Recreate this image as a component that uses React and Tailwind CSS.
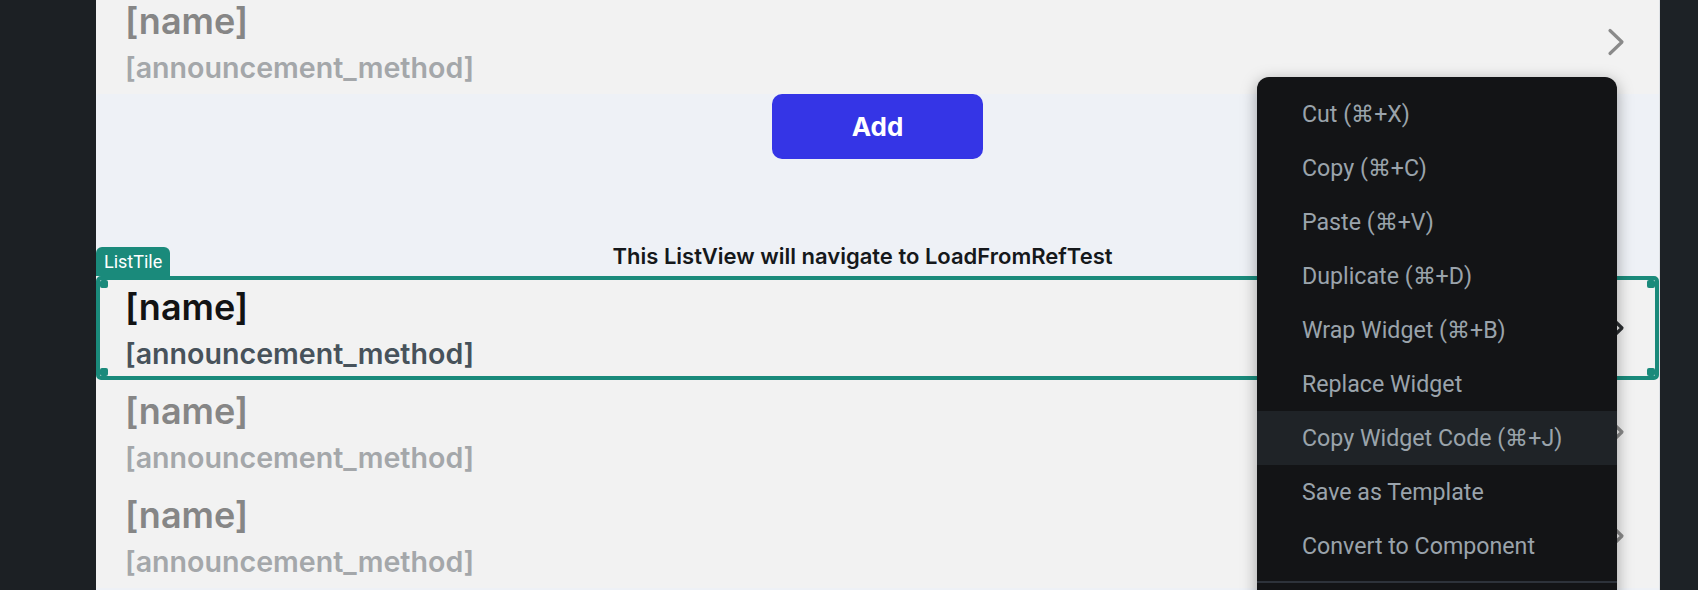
import React from 'react'

const poppins = { fontFamily: 'Inter, "Noto Sans", sans-serif' }

const menuItems = [
  'Cut (⌘+X)',
  'Copy (⌘+C)',
  'Paste (⌘+V)',
  'Duplicate (⌘+D)',
  'Wrap Widget (⌘+B)',
  'Replace Widget',
  'Copy Widget Code (⌘+J)',
  'Save as Template',
  'Convert to Component',
]

function Chevron({ dark }) {
  return (
    <svg width="18" height="28" viewBox="0 0 18 28" fill="none" className="shrink-0">
      <polyline
        points="3,2.5 15,14 3,25.5"
        stroke={dark ? '#2b2e31' : '#8a8a8a'}
        strokeWidth="3.2"
        strokeLinecap="round"
        strokeLinejoin="round"
      />
    </svg>
  )
}

function Tile({ selected, className = '' }) {
  return (
    <div className={`flex h-[104px] shrink-0 items-center justify-between bg-[#f2f2f2] pl-[29px] pr-[34px] ${className}`}>
      <div className="flex flex-col self-start pt-[10px]" style={poppins}>
        <span
          className={`h-[42px] text-[36px] leading-[42px] font-semibold ${
            selected ? 'text-[#121314]' : 'text-[#868686]'
          }`}
        >
          [name]
        </span>
        <span
          className={`mt-[9px] h-[33px] text-[28.6px] leading-[33px] font-semibold ${
            selected ? 'text-[#47525b]' : 'text-[#a4a7aa]'
          }`}
        >
          [announcement_method]
        </span>
      </div>
      <Chevron dark={selected} />
    </div>
  )
}

function ContextMenu() {
  return (
    <div
      className="absolute left-[1161px] top-[77px] w-[360px] rounded-t-[12px] bg-[#131416] pt-[10px] pb-[40px] shadow-[0_4px_16px_rgba(0,0,0,0.35)]"
      style={{ fontFamily: 'Roboto, "Noto Sans", sans-serif' }}
    >
      {menuItems.map((item) => (
        <div
          key={item}
          className={`flex h-[54px] items-center pl-[45px] text-[23.2px] text-[#9aa3ab] ${
            item.startsWith('Copy Widget') ? 'bg-[#1f2327]' : ''
          }`}
        >
          {item}
        </div>
      ))}
      <div className="mt-[8px] h-[2px] bg-[#2d323a]" />
    </div>
  )
}

export default function App() {
  return (
    <div className="flex h-[590px] w-[1698px] overflow-hidden bg-[#1d2125]">
      <div className="w-[96px] shrink-0 bg-[#1c2024]" />

      <div className="relative flex w-[1564px] shrink-0 flex-col overflow-hidden border-r border-[#dfe2e6] bg-[#eef1f6]">
        <Tile className="-mt-[10px]" />

        <div className="flex justify-center">
          <button
            type="button"
            className="h-[65px] w-[211px] rounded-[10px] bg-[#3535e6] text-[26px] font-bold text-white"
            style={poppins}
          >
            Add
          </button>
        </div>

        <div className="flex h-[117px] items-end justify-center pb-[7px] pr-[30px]">
          <span className="text-[22px] font-semibold leading-[26px] text-[#15181b]" style={poppins}>
            This ListView will navigate to LoadFromRefTest
          </span>
        </div>

        <div className="relative">
          <div
            className="absolute -top-[29px] left-0 flex h-[29px] items-center rounded-t-[6px] bg-[#1a8a7b] px-[8px] text-[18px] text-white"
            style={{ fontFamily: 'Roboto, sans-serif' }}
          >
            ListTile
          </div>
          <Tile selected />
          <div className="pointer-events-none absolute inset-0 rounded-[5px] border-[4px] border-[#1a8a7b]">
            <span className="absolute left-0 top-0 h-[8px] w-[8px] rounded-[2px] bg-[#1a8a7b]" />
            <span className="absolute right-0 top-0 h-[8px] w-[8px] rounded-[2px] bg-[#1a8a7b]" />
            <span className="absolute bottom-0 left-0 h-[8px] w-[8px] rounded-[2px] bg-[#1a8a7b]" />
            <span className="absolute bottom-0 right-0 h-[8px] w-[8px] rounded-[2px] bg-[#1a8a7b]" />
          </div>
        </div>

        <Tile />
        <Tile />

        <ContextMenu />
      </div>

      <div className="flex-1 bg-[#1d2226]" />
    </div>
  )
}
